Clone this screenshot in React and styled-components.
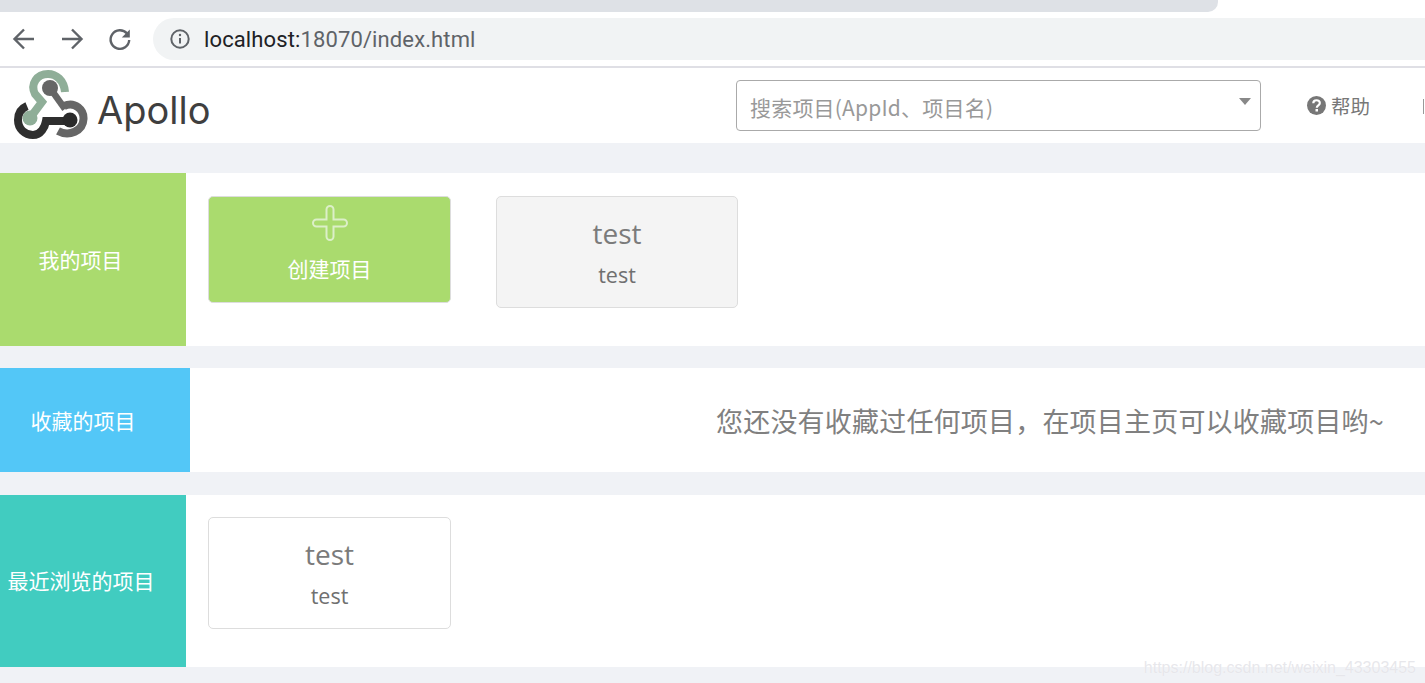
import React from 'react';
import styled, { createGlobalStyle } from 'styled-components';

const GlobalStyle = createGlobalStyle`
  html, body {
    margin: 0;
    padding: 0;
    background: #fff;
    overflow: hidden;
  }
  * { box-sizing: border-box; }
`;

const Page = styled.div`
  width: 1425px;
  height: 683px;
  overflow: hidden;
  font-family: "Open Sans", "Noto Sans CJK SC", sans-serif;
`;

const TabStrip = styled.div`
  width: 1218px;
  height: 12px;
  background: #dee1e6;
  border-bottom-right-radius: 10px;
`;

const Toolbar = styled.div`
  height: 56px;
  display: flex;
  align-items: flex-end;
  background: #fff;
  border-bottom: 2px solid #dfdfe5;
  padding-bottom: 6px;
`;

const NavButtons = styled.div`
  width: 153px;
  height: 42px;
  display: flex;
  align-items: center;
  gap: 22px;
  padding-left: 11px;
  color: #5f6368;
`;

const Omnibox = styled.div`
  flex: 1;
  height: 42px;
  display: flex;
  align-items: center;
  gap: 14px;
  padding-left: 17px;
  background: #f1f3f4;
  border-radius: 21px 0 0 21px;
  color: #5f6368;
`;

const Url = styled.span`
  font-family: "Roboto", sans-serif;
  font-size: 22px;
  letter-spacing: 0.12px;
  color: #5f6368;
  b {
    font-weight: 400;
    color: #202124;
  }
`;

const Header = styled.header`
  height: 75px;
  display: flex;
  background: #fff;
  position: relative;
`;

const Brand = styled.div`
  width: 736px;
  display: flex;
  align-items: flex-end;
  padding: 0 0 3px 13px;
  gap: 9px;
`;

const BrandName = styled.span`
  font-family: "Inter", sans-serif;
  font-size: 38px;
  font-weight: 400;
  line-height: 38px;
  letter-spacing: 0;
  color: #3f3f3f;
  padding-bottom: 11px;
`;

const Search = styled.div`
  margin-top: 12px;
  width: 525px;
  height: 51px;
  border: 1px solid #aaa;
  border-radius: 4px;
  display: flex;
  align-items: center;
  padding: 3px 0 0 13px;
  position: relative;
  font-family: "Noto Sans CJK SC", sans-serif;
  font-size: 21px;
  letter-spacing: 0.2px;
  color: #999;
`;

const Caret = styled.span`
  position: absolute;
  right: 9px;
  top: 17px;
  border-style: solid;
  border-width: 7px 6.5px 0 6.5px;
  border-color: #888 transparent transparent transparent;
`;

const HelpLink = styled.div`
  margin: 24px 0 0 46px;
  height: 26px;
  display: flex;
  align-items: center;
  gap: 5px;
  font-family: "Noto Sans CJK SC", sans-serif;
  font-size: 19.5px;
  color: #777;
`;

const UserStub = styled.span`
  position: absolute;
  left: 1423px;
  top: 31px;
  width: 2px;
  height: 15px;
  border-left: 1px solid #999;
`;

const Content = styled.main`
  background: #f0f2f6;
  height: 540px;
  padding-top: 30px;
  display: flex;
  flex-direction: column;
  position: relative;
`;

const Section = styled.section`
  height: ${p => p.$height}px;
  margin-bottom: ${p => p.$gap}px;
  display: flex;
  background: #fff;
`;

const SectionLabel = styled.div`
  width: ${p => p.$width}px;
  flex: none;
  display: flex;
  align-items: center;
  justify-content: center;
  padding: ${p => p.$pad};
  background: ${p => p.$color};
  color: #fff;
  font-family: "Noto Sans CJK SC", sans-serif;
  font-size: 21px;
  font-weight: 400;
  white-space: nowrap;
`;

const CardRow = styled.div`
  display: flex;
  align-items: flex-start;
  gap: 45px;
  padding: ${p => p.$top}px 0 0 22px;
`;

const Card = styled.div`
  width: ${p => p.$width}px;
  height: ${p => p.$height}px;
  flex: none;
  display: flex;
  flex-direction: column;
  align-items: center;
  border: 1px solid #ddd;
  border-radius: 5px;
  background: ${p => p.$bg};
  color: #fff;
`;

const CardTitle = styled.div`
  margin-top: 17px;
  font-family: "Open Sans", sans-serif;
  font-size: 28px;
  line-height: 38px;
  color: #7b7b7b;
`;

const CardSub = styled.div`
  margin-top: 9px;
  font-family: "Open Sans", sans-serif;
  font-size: 21.5px;
  line-height: 28px;
  color: #707070;
`;

const CreateText = styled.div`
  margin-top: 11px;
  font-family: "Noto Sans CJK SC", sans-serif;
  font-size: 21px;
  font-weight: 400;
  line-height: 30px;
`;

const EmptyNote = styled.div`
  padding: 31px 0 0 526px;
  font-family: "Noto Sans CJK SC", sans-serif;
  font-size: 27px;
  font-weight: 400;
  letter-spacing: 0.2px;
  line-height: 44px;
  color: #808080;
  white-space: nowrap;
`;

const Watermark = styled.span`
  position: absolute;
  right: 9px;
  bottom: 6px;
  font-family: "Liberation Sans", sans-serif;
  font-size: 16px;
  color: rgba(225, 225, 230, 0.8);
  text-shadow: 0 0 1px rgba(255, 255, 255, 0.9);
`;

const ArrowIcon = ({ flip }) => (
  <svg width="26" height="26" viewBox="0 0 26 26" fill="none" stroke="currentColor" strokeWidth="2.4"
    style={flip ? { transform: 'scaleX(-1)' } : undefined}>
    <path d="M23 13H4M13 3.5L3.5 13l9.500 9.500" />
  </svg>
);

const ReloadIcon = () => (
  <svg width="26" height="26" viewBox="0 0 26 26" fill="none">
    <path d="M20 7.500A9.300 9.300 0 1 0 22.200 14" stroke="currentColor" strokeWidth="2.400" />
    <path d="M22.800 3.500v8h-8z" fill="currentColor" />
  </svg>
);

const InfoIcon = () => (
  <svg width="20" height="20" viewBox="0 0 20 20" fill="none">
    <circle cx="10" cy="10" r="8.700" stroke="currentColor" strokeWidth="2" />
    <path d="M10 9v5.500" stroke="currentColor" strokeWidth="2" />
    <circle cx="10" cy="6" r="1.200" fill="currentColor" />
  </svg>
);

const HelpIcon = () => (
  <svg width="19" height="19" viewBox="0 0 19 19">
    <circle cx="9.500" cy="9.500" r="9.500" fill="#777" />
    <path d="M6.300 7.300c0-4 6.500-4 6.500-.3 0 2.400-3 2.200-3 4.700" fill="none" stroke="#fff" strokeWidth="2.200" />
    <rect x="8.500" y="13" width="2.500" height="2.500" fill="#fff" />
  </svg>
);

const ApolloMark = () => (
  <svg width="75" height="71" viewBox="0 0 75 71" fill="none">
    <path d="M52 23C51 11 43 5 35 5 24 5 17 15 22 25L29 33 17 49" stroke="#8fae98" strokeWidth="8" />
    <circle cx="17" cy="49" r="7.500" fill="#8fae98" />
    <path d="M37 19L52 40" stroke="#666" strokeWidth="6.500" />
    <circle cx="37" cy="19" r="8" fill="#666" />
    <path d="M51 37C62 32 71 41 70.500 50 70 62 56 68 45 62" stroke="#666" strokeWidth="8" />
    <path d="M14 37C7 40 5 46 5 51 5 60 12 66 20 66 28 66 32 58 33 52H57" stroke="#2e2e2e" strokeWidth="8" />
    <circle cx="57" cy="51" r="7.500" fill="#2a2a2a" />
  </svg>
);

const PlusIcon = () => (
  <svg width="38" height="38" viewBox="0 0 38 38" fill="none" style={{ marginTop: 7 }}>
    <path
      d="M15.500 5.500a3.500 3.500 0 0 1 7 0V15.500H32.500a3.500 3.500 0 0 1 0 7H22.500V32.500a3.500 3.500 0 0 1-7 0V22.500H5.500a3.500 3.500 0 0 1 0-7H15.500z"
      stroke="#dcefc8"
      strokeWidth="2"
    />
  </svg>
);

function App() {
  return (
    <Page>
      <GlobalStyle />
      <TabStrip />
      <Toolbar>
        <NavButtons>
          <ArrowIcon />
          <ArrowIcon flip />
          <ReloadIcon />
        </NavButtons>
        <Omnibox>
          <InfoIcon />
          <Url><b>localhost:</b>18070/index.html</Url>
        </Omnibox>
      </Toolbar>
      <Header>
        <Brand>
          <ApolloMark />
          <BrandName>Apollo</BrandName>
        </Brand>
        <Search>
          搜索项目(AppId、项目名)
          <Caret />
        </Search>
        <HelpLink><HelpIcon />帮助</HelpLink>
        <UserStub />
      </Header>
      <Content>
        <Section $height={173} $gap={22}>
          <SectionLabel $width={186} $color="#aadb6e" $pad="0 25px 2px 0">我的项目</SectionLabel>
          <CardRow $top={23}>
            <Card $width={243} $height={107} $bg="#aadb6e">
              <PlusIcon />
              <CreateText>创建项目</CreateText>
            </Card>
            <Card $width={242} $height={112} $bg="#f4f4f4">
              <CardTitle>test</CardTitle>
              <CardSub>test</CardSub>
            </Card>
          </CardRow>
        </Section>
        <Section $height={104} $gap={23}>
          <SectionLabel $width={190} $color="#53c7f7" $pad="0 24px 0 0">收藏的项目</SectionLabel>
          <EmptyNote>您还没有收藏过任何项目，在项目主页可以收藏项目哟~</EmptyNote>
        </Section>
        <Section $height={172} $gap={0}>
          <SectionLabel $width={186} $color="#41ccc0" $pad="0 24px 2px 0">最近浏览的项目</SectionLabel>
          <CardRow $top={22}>
            <Card $width={243} $height={112} $bg="#fff">
              <CardTitle>test</CardTitle>
              <CardSub>test</CardSub>
            </Card>
          </CardRow>
        </Section>
        <Watermark>https://blog.csdn.net/weixin_43303455</Watermark>
      </Content>
    </Page>
  );
}

export default App;
